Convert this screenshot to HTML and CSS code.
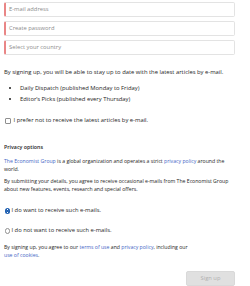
FILE: index.html
```html
<!DOCTYPE html>
<html lang="en">
<head>
<meta charset="utf-8">
<title>Sign up</title>
<link rel="stylesheet" href="styles.css">
</head>
<body>
<form class="form">
  <div class="field">E-mail address</div>
  <div class="field">Create password</div>
  <div class="field">Select your country</div>

  <p class="intro">By signing up, you will be able to stay up to date with the latest articles by e-mail.</p>
  <ul class="list">
    <li>Daily Dispatch (published Monday to Friday)</li>
    <li>Editor’s Picks (published every Thursday)</li>
  </ul>

  <label class="check-row"><span class="checkbox"></span>I prefer not to receive the latest articles by e-mail.</label>

  <h4 class="heading">Privacy options</h4>
  <p class="small econ"><span class="link">The Economist Group</span> is a global organization and operates a strict <span class="link">privacy policy</span> around the <span>world.</span></p>
  <p class="small submit">By submitting your details, you agree to receive occasional e-mails from The Economist Group about new features, events, research and special offers.</p>

  <label class="radio-row first"><span class="radio on"></span>I do want to receive such e-mails.</label>
  <label class="radio-row second"><span class="radio"></span>I do not want to receive such e-mails.</label>

  <p class="small terms">By signing up, you agree to our <span class="link">terms of use</span> and <span class="link">privacy policy</span>, including <span>our</span> <span class="link">use of cookies</span>.</p>

  <div class="actions"><span class="button">Sign up</span></div>
</form>
</body>
</html>
```
FILE: styles.css
```css
html, body {
  margin: 0;
  padding: 0;
  background: #ffffff;
}
body {
  font-family: "Open Sans", "Liberation Sans", sans-serif;
  font-size: 5.85px;
  line-height: 7.5px;
  color: #1e1e1e;
}
.form {
  display: flex;
  flex-direction: column;
  width: 231px;
  padding: 2px 0 0 4px;
}
.field {
  box-sizing: border-box;
  height: 15px;
  margin-bottom: 4px;
  border: 1px solid #e3e3e3;
  border-left: 2px solid #e98686;
  border-radius: 2px;
  padding-left: 3px;
  display: flex;
  align-items: center;
  color: #8c8c8c;
  font-size: 5.8px;
}
.field:last-of-type { margin-bottom: 0; }
p, ul, h4 { margin: 0; }
.intro { margin-top: 10.25px; }
.list {
  margin-top: 8px;
  padding-left: 16px;
  list-style: disc;
}
.list li + li { margin-top: 3.5px; }
.check-row {
  margin-top: 14px;
  display: flex;
  align-items: center;
}
.checkbox {
  box-sizing: border-box;
  width: 5.5px;
  height: 5.5px;
  border: 0.7px solid #8f8f8f;
  border-radius: 1px;
  margin-left: 1px;
  margin-right: 3px;
}
.heading {
  margin-top: 19.5px;
  font-weight: 600;
  font-size: 5.3px;
}
.small {
  font-size: 5.15px;
  line-height: 7.4px;
}
.econ { margin-top: 6.55px; }
.submit { margin-top: 5.2px; }
.terms { margin-top: 9.55px; max-width: 184px; }
.link { color: #4565c6; }
.radio-row {
  display: flex;
  align-items: center;
  font-size: 5.8px;
}
.radio-row.first { margin-top: 14.15px; }
.radio-row.second { margin-top: 12.5px; }
.radio {
  box-sizing: border-box;
  width: 5.5px;
  height: 5.5px;
  border-radius: 50%;
  border: 0.7px solid #8f8f8f;
  margin-left: 0.5px;
  margin-right: 1.5px;
}
.radio.on {
  border: 0;
  background: radial-gradient(circle, #1d5eb0 0 1.1px, #ffffff 1.3px 1.6px, #1d5eb0 1.8px);
}
.actions {
  display: flex;
  justify-content: flex-end;
  margin-top: 11.9px;
}
.button {
  width: 49px;
  height: 15px;
  box-sizing: border-box;
  border: 1px solid #d9d9d9;
  border-radius: 2px;
  background: #e0e0e0;
  color: #b0b0b0;
  display: flex;
  align-items: center;
  justify-content: center;
  font-size: 5.8px;
}
```
